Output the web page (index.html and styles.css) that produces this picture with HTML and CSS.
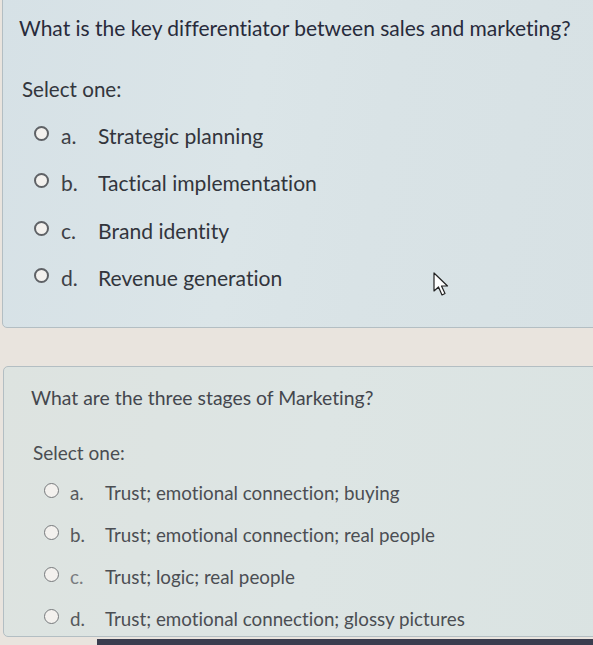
FILE: index.html
```html
<!DOCTYPE html>
<html>
<head>
<meta charset="utf-8">
<link rel="stylesheet" href="styles.css">
</head>
<body>
<div class="page">
  <section class="card card-one">
    <h2 class="qtext q1">What is the key differentiator between sales and marketing?</h2>
    <p class="prompt p1">Select one:</p>
    <div class="answers a1">
      <label class="opt"><span class="radio"></span><span class="letter">a.</span><span class="ans">Strategic planning</span></label>
      <label class="opt"><span class="radio"></span><span class="letter">b.</span><span class="ans">Tactical implementation</span></label>
      <label class="opt"><span class="radio"></span><span class="letter">c.</span><span class="ans">Brand identity</span></label>
      <label class="opt"><span class="radio"></span><span class="letter">d.</span><span class="ans">Revenue generation</span></label>
    </div>
    <svg class="cursor" width="17" height="25" viewBox="0 0 17 25"><path d="M1 1 L1 19 L5.5 15 L9 23 L12 21.5 L8.5 14 L14.5 14 Z" fill="#fff" stroke="#222" stroke-width="1.2" stroke-linejoin="round"/></svg>
  </section>
  <section class="card card-two">
    <h2 class="qtext q2">What are the three stages of Marketing?</h2>
    <p class="prompt p2">Select one:</p>
    <div class="answers a2">
      <label class="opt"><span class="radio"></span><span class="letter">a.</span><span class="ans">Trust; emotional connection; buying</span></label>
      <label class="opt"><span class="radio"></span><span class="letter">b.</span><span class="ans">Trust; emotional connection; real people</span></label>
      <label class="opt"><span class="radio"></span><span class="letter">c.</span><span class="ans">Trust; logic; real people</span></label>
      <label class="opt"><span class="radio"></span><span class="letter">d.</span><span class="ans">Trust; emotional connection; glossy pictures</span></label>
    </div>
  </section>
  <div class="bottom">
    <div class="bottom-bar"></div>
  </div>
</div>
</body>
</html>
```
FILE: styles.css
```css
html, body {
  margin: 0;
  padding: 0;
}
body {
  background: #e9e4de;
  font-family: Lato, "Open Sans", sans-serif;
  font-variant-ligatures: none;
  overflow: hidden;
  width: 593px;
  height: 645px;
}
.page {
  display: flex;
  flex-direction: column;
  width: 620px;
}
.card {
  position: relative;
  border: 1px solid #b3bec3;
  border-radius: 5px;
  box-sizing: border-box;
}
.card-one {
  margin: -6px 0 0 2px;
  height: 334px;
  padding: 18px 0 0 16px;
  background: linear-gradient(100deg, #d6e1e6 0%, #dbe5e8 40%, #d9e3e6 60%, #d7e1e4 100%);
}
.card-two {
  margin: 38px 0 0 3px;
  height: 271px;
  padding: 18px 0 0 27px;
  background: linear-gradient(100deg, #dde3e0 0%, #dde5e4 50%, #dae3e2 100%);
}
.qtext {
  margin: 0;
  font-weight: 400;
  white-space: nowrap;
}
.q1 {
  font-size: 21px;
  line-height: 29px;
  color: #282b3b;
}
.q2 {
  font-size: 19.4px;
  line-height: 25px;
  color: #44474e;
}
.prompt {
  margin: 0;
}
.p1 {
  margin-top: 34px;
  margin-left: 3px;
  font-size: 20.6px;
  line-height: 26px;
  color: #33363d;
}
.p2 {
  margin-top: 31px;
  margin-left: 2px;
  font-size: 19px;
  line-height: 24px;
  color: #4a4d52;
}
.answers {
  display: flex;
  flex-direction: column;
}
.a1 {
  margin-top: 20px;
  margin-left: 15px;
  gap: 21.5px;
}
.a2 {
  margin-top: 15px;
  margin-left: 13px;
  gap: 18px;
}
.opt {
  display: flex;
  align-items: center;
  white-space: nowrap;
}
.a1 .opt {
  height: 26px;
  font-size: 21.1px;
  color: #32353c;
}
.a2 .opt {
  height: 24px;
  font-size: 18.8px;
  color: #4b4e53;
}
.radio {
  flex: none;
  width: 15px;
  height: 15px;
  border-radius: 50%;
  box-sizing: border-box;
  border: 2px solid #5f6266;
  background: #f3f1ee;
  margin-top: -4px;
}
.a2 .radio {
  border-color: #76797c;
  border-width: 1.6px;
  margin-top: -3px;
}
.letter {
  flex: none;
}
.a1 .letter {
  width: 37px;
  margin-left: 12px;
  color: #3d4046;
}
.a2 .letter {
  width: 35px;
  margin-left: 11px;
  color: #55585c;
}
.a2 .opt:nth-child(3) .letter {
  color: #7a7d80;
}
.cursor {
  position: absolute;
  left: 430px;
  top: 277px;
}
.bottom {
  display: flex;
  margin-top: 2px;
  height: 10px;
}
.bottom-bar {
  margin-left: 97px;
  flex: 1;
  background: #3a3d4f;
}
```
